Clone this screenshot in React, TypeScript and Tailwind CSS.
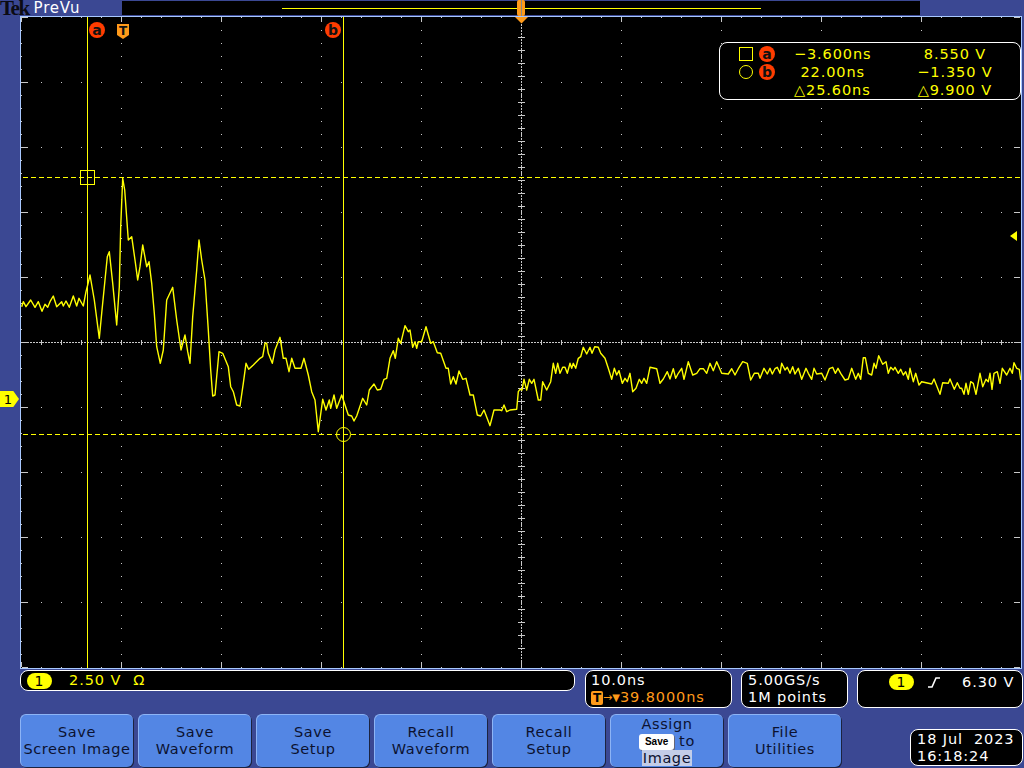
import React from 'react';

// waveform traced from the capture: [zoomX, zoomY] pairs, grouped by the crop they were read from
const toPts = (ox: number, oy: number, raw: number[]) => {
  const out: string[] = [];
  for (let i = 0; i < raw.length; i += 2) {
    out.push(`${(ox + raw[i] / 3).toFixed(1)},${(oy + raw[i + 1] / 3).toFixed(1)}`);
  }
  return out;
};

const part1 = [65,410,70,395,78,410,92,390,105,412,115,395,126,424,135,403,143,412,150,395,160,378,170,410,185,395,190,408,198,393,208,412,220,378,230,408,237,385,250,408,258,365,263,345,270,315,283,390,298,505,305,430,315,330,322,260,328,245,338,340,350,465,358,350,362,170,368,25,374,60,385,210,395,200,405,270,413,330,420,290,428,225,440,290,447,275,455,340,463,430,470,530,481,580,490,540,500,390,518,352,530,450,543,540,555,495,563,545,570,580,578,440,590,300,597,210,605,270,615,330,625,480,632,600,638,678,645,675,657,545,668,550,685,590,692,650,700,665,710,705,720,708,730,640,738,580,746,598,760,585];
const part2 = [60,145,68,140,75,100,80,100,85,130,97,160,105,120,120,82,130,145,138,145,147,185,155,145,165,175,183,175,192,145,205,195,215,245,225,270,235,365,248,268,258,300,268,270,272,295,282,255,290,295,305,255,315,285,325,315,335,318,342,333,350,318,368,265,380,285,388,240,402,222,412,240,422,238,432,208,440,205,450,145,460,122,466,145,475,85,482,100,495,47,505,65,510,60,518,112,525,95,530,115,535,95,545,95,558,50,572,100,580,95,592,128,602,130,618,175,625,175,632,222,640,200,648,222,657,183,668,208,678,205,690,255,700,255,712,315,722,318,732,300,750,347,762,300,780,300,785,302,792,285,800,305];
const part3 = [0,240,20,238,25,185,30,178,36,180,42,148,50,180,58,148,65,160,72,148,85,210,92,210,98,155,110,180,122,155,130,100,137,130,143,100,150,130,158,112,165,112,172,130,180,100,185,115,190,100,197,115,205,85,212,80,220,52,230,72,240,52,246,70,254,50,265,52,272,70,285,85,295,115,305,148,313,115,320,135,327,122,337,160,345,145,352,155,360,130,368,185,378,175,388,148,395,160,402,145,410,160,420,112,440,116,450,160,460,147,472,125,480,147,490,116,497,145,505,130,515,115,522,148,535,95,548,135,560,130,570,116,580,116,590,130,600,100,610,122,620,95,635,130,655,132,665,116,675,135,685,116,698,95,712,100,722,150,733,130,745,130];
const part4 = [0,145,12,115,22,132,30,115,37,132,45,116,52,112,60,130,65,100,75,120,82,112,90,130,98,110,105,132,115,115,125,148,138,115,145,130,155,148,162,115,170,132,185,130,195,150,208,116,218,112,226,130,234,115,242,130,255,150,265,147,275,115,287,148,295,130,302,148,310,83,316,83,325,130,335,135,342,100,348,115,356,77,368,103,378,95,385,130,392,112,400,120,405,112,415,130,422,118,430,135,437,125,445,148,450,115,460,155,467,130,477,165,485,155,515,162,522,147,540,193,548,158,565,160,570,147,583,178,592,158,600,175,605,175,612,193,618,160,625,193,632,155,640,160,648,193,660,130,668,170,678,148,685,155,690,130,696,178,702,130,712,125,720,160,727,115,740,135,750,115,757,130,762,98,770,115,778,118,782,150];

const wavePoints = [
  ...toPts(0, 170, part1),
  ...toPts(240, 310, part2),
  ...toPts(510, 330, part3),
  ...toPts(760, 330, part4),
].join(' ');

const range = (from: number, to: number, step: number) => {
  const r: number[] = [];
  for (let v = from; v <= to; v += step) r.push(v);
  return r;
};

const majorX = range(21, 1021, 100);
const majorY = range(17, 667, 65);

function Graticule() {
  const dot = '#c8c8c8';
  return (
    <g shapeRendering="crispEdges" fill={dot}>
      {/* dots along each major row */}
      {majorY.map((y) =>
        range(41, 1001, 20).map((x) => <rect key={`r${y}-${x}`} x={x} y={y} width={1} height={1} />)
      )}
      {/* dots along each major column */}
      {majorX.map((x) =>
        range(30, 660, 13).map((y) => <rect key={`c${x}-${y}`} x={x} y={y} width={1} height={1} />)
      )}
      {/* little ticks on major crossings */}
      {majorX.map((x) => (
        <g key={x}>
          <rect x={x} y={17} width={1} height={5} />
          <rect x={x} y={662} width={1} height={5} />
        </g>
      ))}
      {majorY.map((y) => (
        <g key={y}>
          <rect x={22} y={y} width={6} height={1} />
          <rect x={1014} y={y} width={6} height={1} />
        </g>
      ))}
      {/* centre lines */}
      {range(21, 1020, 3).map((x) => <rect key={`h${x}`} x={x} y={342} width={2} height={1} />)}
      {range(24, 667, 3).map((y) => <rect key={`v${y}`} x={521} y={y} width={1} height={2} />)}
      {range(37, 660, 13).map((y) => <rect key={`t${y}`} x={518} y={y} width={7} height={1} />)}
      {range(41, 1001, 20).map((x) => <rect key={`u${x}`} x={x} y={340} width={1} height={5} />)}
    </g>
  );
}

function CursorBadge({ cx, cy, label }: { cx: number; cy: number; label: string }) {
  return (
    <g>
      <circle cx={cx} cy={cy} r={8} fill="#ff3c00" />
      <text x={cx} y={cy + 4.5} textAnchor="middle" fontSize={14} fontWeight={700} fill="#111" fontFamily="'DejaVu Sans', sans-serif">
        {label}
      </text>
    </g>
  );
}

function ScopeDrawing() {
  return (
    <svg viewBox="21 17 1000 651" className="block w-[1000px] h-[651px]">
      <Graticule />
      <g stroke="#ffff00" fill="none" shapeRendering="crispEdges" strokeWidth={1}>
        <line x1={87.5} y1={17} x2={87.5} y2={668} />
        <line x1={343.5} y1={17} x2={343.5} y2={668} />
        <line x1={23} y1={177.5} x2={1021} y2={177.5} strokeDasharray="5 3" />
        <line x1={23} y1={434.5} x2={1021} y2={434.5} strokeDasharray="5 3" />
        <rect x={80.5} y={170.5} width={14} height={14} />
      </g>
      <circle cx={343.5} cy={434.5} r={7} stroke="#ffff00" fill="none" />
      <polyline points={wavePoints} fill="none" stroke="#ffff00" strokeWidth={1.4} strokeLinejoin="round" />
      <CursorBadge cx={97} cy={30} label="a" />
      <CursorBadge cx={333} cy={30} label="b" />
      {/* trigger T flag */}
      <path d="M117 24h12v11l-6 4-6-4z" fill="#ff9a1a" />
      <text x={123} y={35} textAnchor="middle" fontSize={12} fontWeight={700} fill="#111" fontFamily="'DejaVu Sans', sans-serif">T</text>
      {/* expansion point + trigger level markers */}
      <path d="M515 17h13l-6.500 6.500z" fill="#ff9a1a" />
      <path d="M1010 236l7-5v10z" fill="#ffff00" />
    </svg>
  );
}

function ChBadge() {
  return (
    <span className="flex items-center justify-center w-[25px] h-[16px] rounded-full bg-[#ffff00] text-black text-[14px] leading-none">1</span>
  );
}

function CursorRow({ icon, badge, time, volts }: { icon?: React.ReactNode; badge?: string; time: string; volts: string }) {
  return (
    <div className="flex items-center h-[18px]">
      <span className="flex justify-center w-[19px] mr-[4px]">{icon}</span>
      <span className="w-[16px] h-[16px] flex items-center justify-center">
        {badge && (
          <span className="flex items-center justify-center w-[16px] h-[16px] rounded-full bg-[#ff3c00] text-[#111] font-bold text-[14px] leading-none">{badge}</span>
        )}
      </span>
      <span className="w-[118px] text-center">{time}</span>
      <span className="w-[134px] text-center">{volts}</span>
    </div>
  );
}

function SoftButton({ children }: { children: React.ReactNode }) {
  return (
    <div className="w-[113px] h-[53px] flex flex-col items-center justify-center rounded-[6px] bg-[#5386e4] border-t border-l border-[#8db4f5] shadow-[1px_1px_0_#1c2340] text-[#0c1230] text-[14.5px] leading-[17px] tracking-[0.6px] whitespace-nowrap">
      {children}
    </div>
  );
}

export default function App() {
  return (
    <div className="w-[1024px] h-[768px] overflow-hidden flex flex-col bg-[#3b4893] font-['DejaVu_Sans',sans-serif]">
      {/* header strip */}
      <div className="h-[16px] flex items-start shrink-0">
        <div className="w-[122px] h-[16px] flex items-center overflow-hidden">
          <span className="font-['Liberation_Serif',serif] text-[21px] leading-none text-[#0b0b14] font-bold tracking-[-1.5px]">Tek</span>
          <span className="ml-[5px] text-[15px] leading-none text-white tracking-[0.8px]">PreVu</span>
        </div>
        <div className="relative w-[798px] h-[14px] mt-px bg-black flex items-center">
          <div className="ml-[160px] w-[479px] h-px bg-[#ffff00]" />
          <div className="absolute left-[395px] top-[-1px] w-[8px] h-[16px] rounded-[2px] bg-[#ff9a1a] border-x-[3px] border-x-[#ff9a1a] flex justify-center">
            <div className="w-px h-full bg-[#888]" />
          </div>
        </div>
      </div>

      {/* scope + side rails */}
      <div className="flex h-[653px] shrink-0">
        <div className="relative w-[20px]">
          <div className="absolute left-0 top-[375px] w-[19px] h-[16px] bg-[#ffff00] [clip-path:polygon(0_0,70%_0,100%_50%,70%_100%,0_100%)] flex items-center justify-center text-black text-[13px] leading-none pr-[3px]">1</div>
        </div>
        <div className="relative w-[1002px] border border-[#a8c8ff] bg-black">
          <ScopeDrawing />
          <div className="absolute left-[698px] top-[25px] w-[302px] h-[58px] pl-[17px] pt-[2px] rounded-[8px] border border-white bg-black text-[#ffff00] text-[14.5px] leading-none tracking-[0.9px] whitespace-nowrap">
            <CursorRow icon={<span className="block w-[14px] h-[14px] border border-[#ffff00]" />} badge="a" time="−3.600ns" volts="8.550 V" />
            <CursorRow icon={<span className="block w-[14px] h-[14px] rounded-full border border-[#ffff00]" />} badge="b" time="22.00ns" volts="−1.350 V" />
            <CursorRow time="△25.60ns" volts="△9.900 V" />
          </div>
        </div>
      </div>

      {/* readouts */}
      <div className="h-[45px] flex items-start pl-[20px] pt-[1px] shrink-0 text-[14.5px] leading-[17px] tracking-[0.9px] whitespace-nowrap">
        <div className="w-[555px] h-[21px] flex items-center pl-[6px] rounded-[8px] border border-white bg-black text-[#ffff00]">
          <ChBadge />
          <span className="ml-[17px]">2.50 V</span>
          <span className="ml-[12px]">Ω</span>
        </div>
        <div className="ml-[10px] w-[147px] h-[38px] pl-[5px] pt-[1px] rounded-[8px] border border-white bg-black text-white">
          <div>10.0ns</div>
          <div className="flex items-center text-[#ff9a1a]">
            <span className="w-[12px] h-[14px] rounded-[2px] bg-[#ff9a1a] text-black text-[12px] font-bold leading-[14px] text-center tracking-normal">T</span>
            <span className="text-[11px] tracking-normal">→</span>
            <span className="text-[10px] tracking-normal">▼</span>
            <span>39.8000ns</span>
          </div>
        </div>
        <div className="ml-[9px] w-[107px] h-[38px] pl-[6px] pt-[1px] rounded-[8px] border border-white bg-black text-white">
          <div>5.00GS/s</div>
          <div>1M points</div>
        </div>
        <div className="ml-[9px] w-[166px] h-[38px] pl-[31px] pt-[3px] rounded-[8px] border border-white bg-black text-white">
          <div className="flex items-center h-[16px]">
            <ChBadge />
            <svg viewBox="0 0 12 12" className="ml-[14px] w-[12px] h-[12px]">
              <path d="M0 11h4l4-9h4" fill="none" stroke="#fff" strokeWidth="1.6" />
            </svg>
            <span className="ml-[22px]">6.30 V</span>
          </div>
        </div>
      </div>

      {/* soft keys */}
      <div className="flex items-start pl-[20px] gap-[5px]">
        <SoftButton>
          <span>Save</span>
          <span>Screen Image</span>
        </SoftButton>
        <SoftButton>
          <span>Save</span>
          <span>Waveform</span>
        </SoftButton>
        <SoftButton>
          <span>Save</span>
          <span>Setup</span>
        </SoftButton>
        <SoftButton>
          <span>Recall</span>
          <span>Waveform</span>
        </SoftButton>
        <SoftButton>
          <span>Recall</span>
          <span>Setup</span>
        </SoftButton>
        <SoftButton>
          <span>Assign</span>
          <span className="flex items-center">
            <span className="mr-[5px] w-[35px] h-[16px] rounded-[3px] bg-white shadow-[1px_1px_0_#667] text-black font-['Liberation_Sans',sans-serif] font-bold text-[10px] leading-[16px] text-center tracking-normal">Save</span>
            to
          </span>
          <span className="px-[1px] bg-[#c3cde8] leading-[16px]">Image</span>
        </SoftButton>
        <SoftButton>
          <span>File</span>
          <span>Utilities</span>
        </SoftButton>
        <div className="ml-[64px] mt-[15px] w-[113px] h-[37px] pl-[6px] pt-px rounded-[8px] border border-white bg-black text-white text-[14.5px] leading-[17px] tracking-[0.9px] whitespace-pre">
          <div>18 Jul  2023</div>
          <div>16:18:24</div>
        </div>
      </div>
    </div>
  );
}
